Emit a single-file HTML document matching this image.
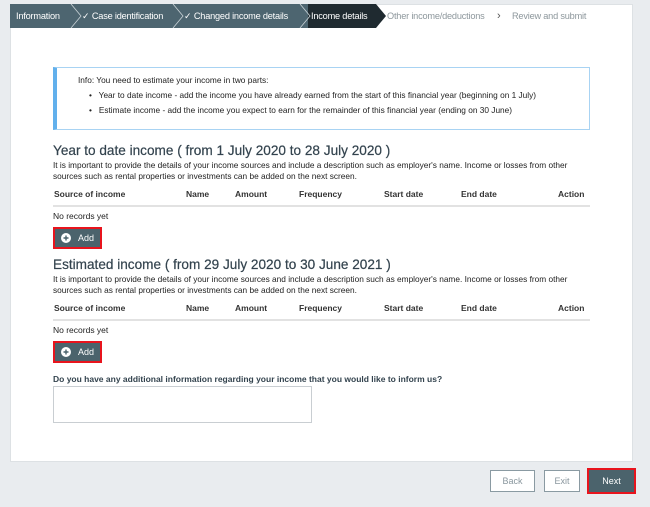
<!DOCTYPE html>
<html><head><style>
*{margin:0;padding:0;box-sizing:border-box}
body{width:650px;height:507px;background:#e9ecef;font-family:"Liberation Sans",Arial,sans-serif;position:relative;overflow:hidden;color:#222}
.card{position:absolute;left:10px;top:4px;width:623px;height:458px;background:#fff;border:1px solid #dde1e4}
.a{position:absolute;white-space:nowrap}
.crumb{position:absolute;top:4px;height:24px;font-size:9.2px;line-height:24px;color:#fff;letter-spacing:-0.2px}
.info{position:absolute;left:53px;top:67px;width:537px;height:63px;border:1px solid #a8d3f3;border-left:4px solid #62b0ec;font-size:8.3px;color:#222}
h2{position:absolute;left:53px;font-weight:normal;font-size:13.6px;color:#33434e;white-space:nowrap;-webkit-text-stroke:0.2px #33434e}
.p{position:absolute;left:53px;font-size:8.3px;line-height:11px;color:#222;width:540px}
.th{position:absolute;font-size:8.5px;font-weight:bold;color:#333}
.line{position:absolute;left:53px;width:537px;height:2px;background:#e2e2e2}
.add{position:absolute;left:53px;width:49px;height:22px;border:2px solid #e8141d;background:#4b636c;color:#fff;font-size:9px;line-height:18px}
.add svg{position:absolute;left:6px;top:4px}
.btn{position:absolute;top:470px;height:22px;border:1px solid #8a9aa2;background:#fff;color:#8a979e;font-size:9px;line-height:20px;text-align:center}
</style></head><body>
<div class="card"></div>
<div class="crumb" style="left:10px;width:365px;background:#4d6570"></div>
<svg class="a" style="left:10px;top:4px" width="380" height="24">
<polygon points="355,0 366,0 376,12 366,24 355,24" fill="#1f2a30"/>
<rect x="298" y="0" width="60" height="24" fill="#1f2a30"/>
<polyline points="61,0 71,12 61,24" fill="none" stroke="#c8d2d6" stroke-width="0.8"/>
<polyline points="163,0 173,12 163,24" fill="none" stroke="#c8d2d6" stroke-width="0.8"/>
<polyline points="290,0 300,12 290,24" fill="none" stroke="#c8d2d6" stroke-width="0.8"/>
</svg>
<div class="crumb a" style="left:16px">Information</div>
<div class="crumb a" style="left:82px">✓ Case identification</div>
<div class="crumb a" style="left:184px">✓ Changed income details</div>
<div class="crumb a" style="left:311px">Income details</div>
<div class="crumb a" style="left:387px;color:#8d979c">Other income/deductions</div>
<div class="crumb a" style="left:497px;color:#555;font-size:11px">›</div>
<div class="crumb a" style="left:512px;color:#8d979c">Review and submit</div>

<div class="info">
<div class="a" style="left:21px;top:7px">Info: You need to estimate your income in two parts:</div>
<div class="a" style="left:32px;top:22px">•&nbsp;&nbsp; Year to date income - add the income you have already earned from the start of this financial year (beginning on 1 July)</div>
<div class="a" style="left:32px;top:37px">•&nbsp;&nbsp; Estimate income - add the income you expect to earn for the remainder of this financial year (ending on 30 June)</div>
</div>

<h2 style="top:143px">Year to date income ( from 1 July 2020 to 28 July 2020 )</h2>
<div class="p" style="top:160px">It is important to provide the details of your income sources and include a description such as employer's name. Income or losses from other sources such as rental properties or investments can be added on the next screen.</div>
<div class="th" style="left:54px;top:189px">Source of income</div>
<div class="th" style="left:186px;top:189px">Name</div>
<div class="th" style="left:235px;top:189px">Amount</div>
<div class="th" style="left:299px;top:189px">Frequency</div>
<div class="th" style="left:384px;top:189px">Start date</div>
<div class="th" style="left:461px;top:189px">End date</div>
<div class="th" style="left:558px;top:189px">Action</div>
<div class="line" style="top:205px"></div>
<div class="a" style="left:53px;top:211px;font-size:8.5px">No records yet</div>
<div class="add" style="top:227px"><svg width="10" height="10"><circle cx="5" cy="5" r="5" fill="#fff"/><path d="M5 2.5V7.5M2.5 5H7.5" stroke="#4b636c" stroke-width="1.4"/></svg><span class="a" style="left:23px">Add</span></div>

<h2 style="top:257px">Estimated income ( from 29 July 2020 to 30 June 2021 )</h2>
<div class="p" style="top:274px">It is important to provide the details of your income sources and include a description such as employer's name. Income or losses from other sources such as rental properties or investments can be added on the next screen.</div>
<div class="th" style="left:54px;top:303px">Source of income</div>
<div class="th" style="left:186px;top:303px">Name</div>
<div class="th" style="left:235px;top:303px">Amount</div>
<div class="th" style="left:299px;top:303px">Frequency</div>
<div class="th" style="left:384px;top:303px">Start date</div>
<div class="th" style="left:461px;top:303px">End date</div>
<div class="th" style="left:558px;top:303px">Action</div>
<div class="line" style="top:319px"></div>
<div class="a" style="left:53px;top:325px;font-size:8.5px">No records yet</div>
<div class="add" style="top:341px"><svg width="10" height="10"><circle cx="5" cy="5" r="5" fill="#fff"/><path d="M5 2.5V7.5M2.5 5H7.5" stroke="#4b636c" stroke-width="1.4"/></svg><span class="a" style="left:23px">Add</span></div>

<div class="th" style="left:53px;top:374px;color:#33434e">Do you have any additional information regarding your income that you would like to inform us?</div>
<div class="a" style="left:53px;top:386px;width:259px;height:37px;border:1px solid #c9ced2"></div>

<div class="btn" style="left:490px;width:45px">Back</div>
<div class="btn" style="left:544px;width:36px">Exit</div>
<div class="btn" style="left:587px;top:468px;width:49px;height:26px;border:2px solid #e8141d;background:#4b636c;color:#fff;line-height:22px">Next</div>
</body></html>
